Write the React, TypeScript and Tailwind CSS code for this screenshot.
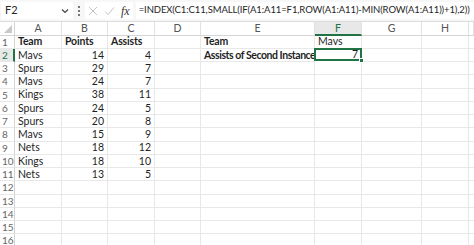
import React from "react";

const cols = ["A", "B", "C", "D", "E", "F", "G", "H", ""];
const grid =
  "grid grid-cols-[15px_47px_46px_47px_46px_114px_47px_60px_47px_1fr]";

const data: [string, string, string][] = [
  ["Mavs", "14", "4"],
  ["Spurs", "29", "7"],
  ["Mavs", "24", "7"],
  ["Kings", "38", "11"],
  ["Spurs", "24", "5"],
  ["Spurs", "20", "8"],
  ["Mavs", "15", "9"],
  ["Nets", "18", "12"],
  ["Kings", "18", "10"],
  ["Nets", "13", "5"],
];

const Cell = ({
  children,
  right,
  bold,
  tight,
}: {
  children?: React.ReactNode;
  right?: boolean;
  bold?: boolean;
  tight?: boolean;
}) => (
  <div
    className={`h-[13.25px] border-r border-b border-[#e8e8e8] px-[3px] flex items-center whitespace-nowrap overflow-visible text-[10.5px] leading-none text-[#1f1f1f] ${
      right ? "justify-end" : ""
    } ${bold ? "font-bold" : ""} ${tight ? "tracking-[-0.45px]" : bold ? "tracking-[-0.15px]" : ""}`}
  >
    {children}
  </div>
);

export default function App() {
  const rows: React.ReactNode[][] = [];
  for (let r = 1; r <= 16; r++) {
    const cells: React.ReactNode[] = Array(9).fill(null);
    if (r === 1) {
      cells[0] = <Cell bold>Team</Cell>;
      cells[1] = <Cell bold>Points</Cell>;
      cells[2] = <Cell bold>Assists</Cell>;
      cells[4] = <Cell bold>Team</Cell>;
      cells[5] = <Cell>Mavs</Cell>;
    } else if (r <= 11) {
      const d = data[r - 2];
      cells[0] = <Cell>{d[0]}</Cell>;
      cells[1] = <Cell right>{d[1]}</Cell>;
      cells[2] = <Cell right>{d[2]}</Cell>;
    }
    if (r === 2) {
      cells[4] = (
        <Cell bold tight>
          Assists of Second Instance
        </Cell>
      );
      cells[5] = (
        <div className="relative h-[13.25px] border-2 border-[#217346] -ml-px -mt-px px-[2px] flex items-center justify-end text-[10.5px] leading-none text-[#1f1f1f]">
          7
          <span className="absolute -right-[4px] -bottom-[4px] w-[5px] h-[5px] bg-[#217346] border border-white" />
        </div>
      );
    }
    rows.push(cells);
  }

  return (
    <div
      className="w-[474px] h-[245px] overflow-hidden bg-white"
      style={{ fontFamily: 'Lato, "Liberation Sans", sans-serif' }}
    >
      {/* formula bar */}
      <div className="h-[22px] flex items-center bg-[#f7f7f7] border-b border-[#dcdcdc] text-[11px] text-[#262626]">
        <div className="ml-[1px] w-[72px] h-[17px] bg-white flex items-center justify-between px-[4px]">
          <span>F2</span>
          <svg width="8" height="6" viewBox="0 0 8 6">
            <path d="M1 1.5 L4 4.5 L7 1.5" stroke="#444" strokeWidth="1.2" fill="none" />
          </svg>
        </div>
        <div className="w-[12px] flex flex-col items-center gap-[2px]">
          <span className="w-[2px] h-[2px] bg-[#777]" />
          <span className="w-[2px] h-[2px] bg-[#777]" />
          <span className="w-[2px] h-[2px] bg-[#777]" />
        </div>
        <div className="flex items-center gap-[6px] px-[3px] h-[17px] bg-white">
          <svg width="10" height="10" viewBox="0 0 10 10">
            <path d="M1 1 L9 9 M9 1 L1 9" stroke="#c4c4c4" strokeWidth="1" />
          </svg>
          <svg width="11" height="10" viewBox="0 0 11 10">
            <path d="M1 5.5 L4 8.5 L10 1.5" stroke="#c4c4c4" strokeWidth="1" fill="none" />
          </svg>
          <span className="italic text-[12px] text-[#333]" style={{ fontFamily: '"Liberation Serif", serif' }}>
            fx
          </span>
        </div>
        <div className="ml-[3px] flex-1 h-[17px] bg-white flex items-center pl-[3px] whitespace-nowrap overflow-hidden text-[9.5px] tracking-[-0.1px]">
          =INDEX(C1:C11,SMALL(IF(A1:A11=F1,ROW(A1:A11)-MIN(ROW(A1:A11))+1),2))
        </div>
      </div>

      {/* column headers */}
      <div className={`${grid} h-[13.5px] text-[10.5px] text-[#555]`}>
        <div className="border-r border-b border-[#d4d4d4] relative">
          <svg className="absolute right-[2px] bottom-[2px]" width="8" height="8" viewBox="0 0 8 8">
            <path d="M8 0 L8 8 L0 8 Z" fill="#c8c8c8" />
          </svg>
        </div>
        {cols.map((c, i) => (
          <div
            key={i}
            className={`flex items-center justify-center leading-none border-r border-[#e1e1e1] ${
              c === "F"
                ? "bg-[#e8e8e8] border-b-2 border-b-[#217346] text-[#217346]"
                : "border-b border-b-[#d4d4d4]"
            }`}
          >
            {c}
          </div>
        ))}
      </div>

      {/* rows */}
      {rows.map((cells, ri) => (
        <div key={ri} className={grid}>
          <div
            className={`h-[13.25px] flex items-center pl-[2px] text-[10px] leading-none text-[#666] border-b border-[#e8e8e8] ${
              ri === 1 ? "bg-[#e8e8e8] border-r-2 border-r-[#217346] text-[#217346]" : "border-r border-r-[#d4d4d4]"
            }`}
          >
            {ri + 1}
          </div>
          {cells.map((c, ci) => (c ? <React.Fragment key={ci}>{c}</React.Fragment> : <Cell key={ci} />))}
        </div>
      ))}
    </div>
  );
}
